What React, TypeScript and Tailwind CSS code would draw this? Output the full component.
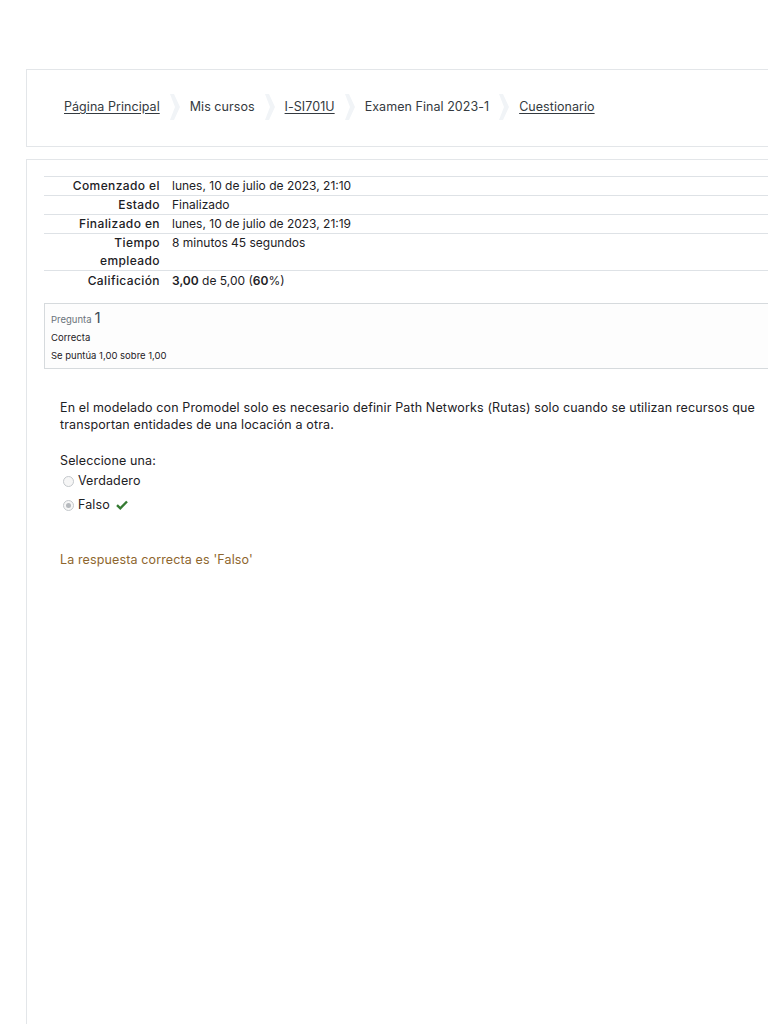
import React from "react";

const crumbs = [
  { label: "Página Principal", link: true },
  { label: "Mis cursos", link: false },
  { label: "I-SI701U", link: true },
  { label: "Examen Final 2023-1", link: false },
  { label: "Cuestionario", link: true },
];

const rows = [
  { label: "Comenzado el", value: "lunes, 10 de julio de 2023, 21:10" },
  { label: "Estado", value: "Finalizado" },
  { label: "Finalizado en", value: "lunes, 10 de julio de 2023, 21:19" },
  { label: "Tiempo empleado", value: "8 minutos 45 segundos" },
];

function Chevron() {
  return (
    <svg width="10" height="26" viewBox="0 0 10 26" className="shrink-0">
      <polygon points="0,0 4,0 10,13 4,26 0,26 5,13" fill="#f1f4f7" />
    </svg>
  );
}

function Radio({ checked }: { checked?: boolean }) {
  return (
    <span className="inline-flex h-[11px] w-[11px] items-center justify-center rounded-full border border-[#c4c8cc] bg-[#f6f6f6]">
      {checked && <span className="h-[5px] w-[5px] rounded-full bg-[#b5b9bd]" />}
    </span>
  );
}

export default function App() {
  return (
    <div className="min-h-[1024px] bg-white font-['Inter',sans-serif] text-[#1d2125]">
      <div className="pt-[69px] pl-[26px]">
        <nav className="flex h-[78px] items-center border-y border-l border-[#e3e6e9] pb-[2px] pl-[37px] text-[12.5px] tracking-[0.05px] text-[#343a40]">
          {crumbs.map((c, i) => (
            <React.Fragment key={c.label}>
              {i > 0 && (
                <span className="mx-[10px] flex items-center">
                  <Chevron />
                </span>
              )}
              <span className={c.link ? "underline underline-offset-2" : ""}>{c.label}</span>
            </React.Fragment>
          ))}
        </nav>

        <div className="mt-[12px] min-h-[866px] border-t border-l border-[#e3e6e9] pt-[16px] pl-[17px]">
          <div className="text-[12px] leading-[18px]">
            {rows.map((r) => (
              <div key={r.label} className="flex border-t border-[#dee2e6]">
                <div className="w-[116px] shrink-0 pl-[20px] text-right font-medium tracking-[0.4px]">{r.label}</div>
                <div className="pl-[12px]">{r.value}</div>
              </div>
            ))}
            <div className="flex border-t border-[#dee2e6] pt-[1px]">
              <div className="w-[116px] shrink-0 pl-[20px] text-right font-medium tracking-[0.4px]">Calificación</div>
              <div className="pl-[12px]">
                <span className="font-semibold">3,00</span> de 5,00 (<span className="font-semibold">60</span>%)
              </div>
            </div>
          </div>

          <div className="mt-[13px] flex h-[66px] flex-col justify-center gap-[3px] border-y border-l border-[#d6dadd] bg-[#fdfdfd] pl-[6px] text-[9.5px] leading-[15px]">
            <div className="flex items-baseline text-[#6a737b]">
              Pregunta <span className="ml-[3px] text-[15px] leading-[15px] text-[#3b4a55]">1</span>
            </div>
            <div>Correcta</div>
            <div>Se puntúa 1,00 sobre 1,00</div>
          </div>

          <div className="pl-[16px] pt-[30px] text-[12.5px] leading-[17px] tracking-[0.13px]">
            <p>
              En el modelado con Promodel solo es necesario definir Path Networks (Rutas) solo cuando se utilizan recursos que
              transportan entidades de una locación a otra.
            </p>
            <p className="mt-[19px]">Seleccione una:</p>
            <div className="mt-[2px] flex items-center gap-[4px] pl-[3px] leading-[20px]">
              <Radio />
              <span>Verdadero</span>
            </div>
            <div className="mt-[4px] flex items-center gap-[4px] pl-[3px] leading-[20px]">
              <Radio checked />
              <span>Falso</span>
              <svg width="12" height="10" viewBox="0 0 12 10" className="ml-[2px]">
                <path d="M1 5.2 L4.3 8.3 L11 1.5" fill="none" stroke="#357a32" strokeWidth="2.4" />
              </svg>
            </div>
            <p className="mt-[36px] text-[#8e662e]">La respuesta correcta es 'Falso'</p>
          </div>
        </div>
      </div>
    </div>
  );
}
